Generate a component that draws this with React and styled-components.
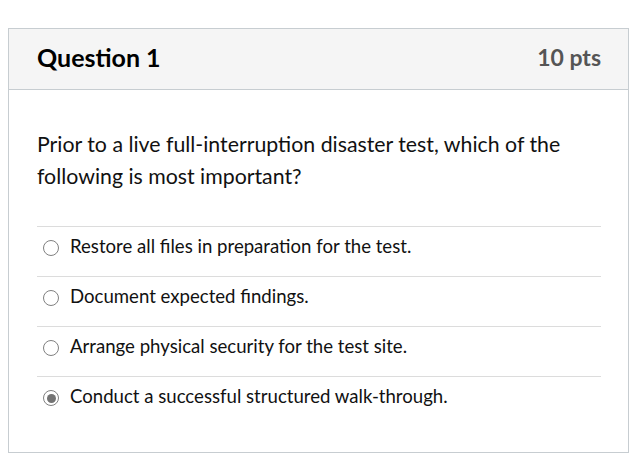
import styled, { createGlobalStyle } from "styled-components";

const Global = createGlobalStyle`
  body {
    margin: 0;
    background: #fff;
    font-family: Lato, "Open Sans", sans-serif;
    color: #111;
  }
`;

const Page = styled.div`
  padding: 28px 0 0 8px;
`;

const Card = styled.section`
  width: 619px;
  border: 1px solid #c7cdd1;
`;

const Header = styled.header`
  height: 61px;
  box-sizing: border-box;
  display: flex;
  align-items: center;
  justify-content: space-between;
  padding: 0 27px 4px 28px;
  background: #f5f5f5;
  border-bottom: 1px solid #c7cdd1;
  h2 {
    margin: 0;
    font-size: 25px;
    font-weight: 700;
    color: #000;
  }
  span {
    font-size: 23px;
    font-weight: 700;
    color: #555;
  }
`;

const Body = styled.div`
  padding: 38px 27px 26px 28px;
`;

const Prompt = styled.p`
  margin: 0 0 34px;
  font-size: 21.3px;
  line-height: 32px;
  color: #111;
`;

const Answers = styled.div`
  display: flex;
  flex-direction: column;
`;

const Answer = styled.label`
  height: 50px;
  box-sizing: border-box;
  display: flex;
  align-items: center;
  gap: 11px;
  padding: 0 0 11px 6px;
  border-top: 1px solid #dcdcdc;
  font-size: 18.6px;
  color: #111;
`;

const Radio = styled.span`
  width: 16px;
  height: 16px;
  margin-top: 4px;
  box-sizing: border-box;
  border-radius: 50%;
  border: 1.5px solid #808080;
  background: #fff;
  display: flex;
  align-items: center;
  justify-content: center;
  flex-shrink: 0;
  &::after {
    content: "";
    width: 9px;
    height: 9px;
    border-radius: 50%;
    background: ${(p) => (p.checked ? "#737373" : "transparent")};
  }
`;

const answers = [
  "Restore all files in preparation for the test.",
  "Document expected findings.",
  "Arrange physical security for the test site.",
  "Conduct a successful structured walk-through.",
];

export default function App() {
  return (
    <Page>
      <Global />
      <Card>
        <Header>
          <h2>Question 1</h2>
          <span>10 pts</span>
        </Header>
        <Body>
          <Prompt>
            Prior to a live full-interruption disaster test, which of the
            following is most important?
          </Prompt>
          <Answers>
            {answers.map((a, i) => (
              <Answer key={a}>
                <Radio checked={i === 3} />
                {a}
              </Answer>
            ))}
          </Answers>
        </Body>
      </Card>
    </Page>
  );
}
